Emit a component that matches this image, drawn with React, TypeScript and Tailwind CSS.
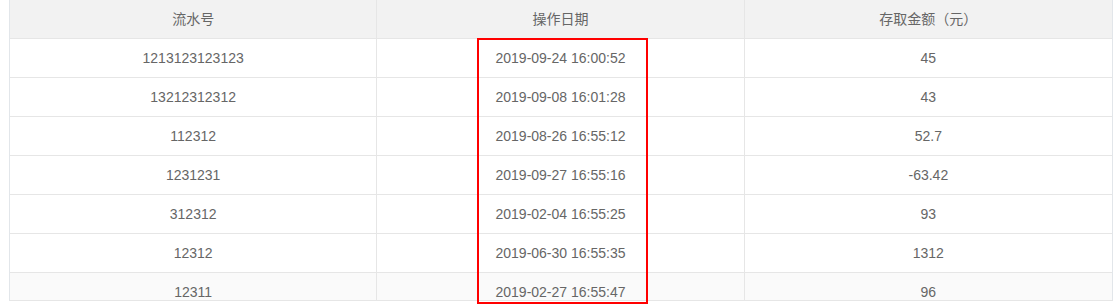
interface Record {
  serial: string;
  date: string;
  amount: string;
}

const records: Record[] = [
  { serial: '1213123123123', date: '2019-09-24 16:00:52', amount: '45' },
  { serial: '13212312312', date: '2019-09-08 16:01:28', amount: '43' },
  { serial: '112312', date: '2019-08-26 16:55:12', amount: '52.7' },
  { serial: '1231231', date: '2019-09-27 16:55:16', amount: '-63.42' },
  { serial: '312312', date: '2019-02-04 16:55:25', amount: '93' },
  { serial: '12312', date: '2019-06-30 16:55:35', amount: '1312' },
  { serial: '12311', date: '2019-02-27 16:55:47', amount: '96' },
];

export default function App() {
  return (
    <div
      className="relative w-[1114px] h-[306px] bg-white pl-[9px] pr-[1px] text-[14px] text-[#666]"
      style={{ fontFamily: '"Liberation Sans", "Noto Sans CJK SC", sans-serif' }}
    >
      <div className="h-[301px] overflow-hidden border-x border-b border-x-[#e2e6ea] border-b-[#e6e6e6]">
        <div className="grid grid-cols-3 h-[39px] bg-[#f2f2f2] border-b border-[#e6e6e6]">
          <div className="flex items-center justify-center border-r border-[#e6e6e6]">流水号</div>
          <div className="flex items-center justify-center border-r border-[#e6e6e6]">操作日期</div>
          <div className="flex items-center justify-center">存取金额（元）</div>
        </div>
        {records.map((r, i) => (
          <div
            key={i}
            className={`grid grid-cols-3 h-[39px] border-b border-[#e6e6e6] ${
              i === records.length - 1 ? 'bg-[#fafafa]' : 'bg-white'
            }`}
          >
            <div className="flex items-center justify-center border-r border-[#e6e6e6]">{r.serial}</div>
            <div className="flex items-center justify-center border-r border-[#e6e6e6]">{r.date}</div>
            <div className="flex items-center justify-center">{r.amount}</div>
          </div>
        ))}
      </div>
      <div className="absolute left-[477px] top-[38px] w-[171px] h-[266px] border-2 border-[#ff0000]" />
    </div>
  );
}
